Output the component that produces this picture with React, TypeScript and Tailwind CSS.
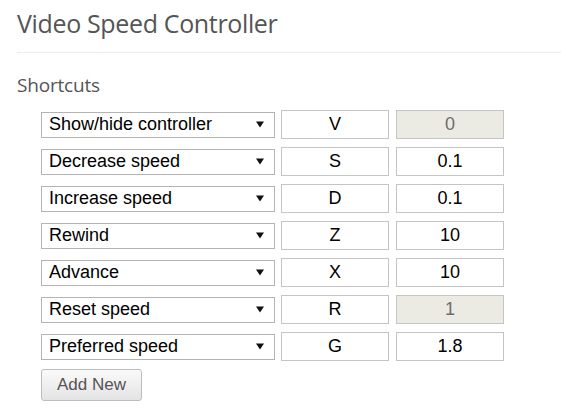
import React from "react";

const shortcuts = [
  { action: "Show/hide controller", key: "V", value: "0", disabled: true },
  { action: "Decrease speed", key: "S", value: "0.1", disabled: false },
  { action: "Increase speed", key: "D", value: "0.1", disabled: false },
  { action: "Rewind", key: "Z", value: "10", disabled: false },
  { action: "Advance", key: "X", value: "10", disabled: false },
  { action: "Reset speed", key: "R", value: "1", disabled: true },
  { action: "Preferred speed", key: "G", value: "1.8", disabled: false },
];

const Arrow = () => (
  <svg width="8" height="7" viewBox="0 0 8 7" className="shrink-0">
    <path d="M0 0.5 H8 L4 6.5 Z" fill="#111" />
  </svg>
);

const App = () => {
  return (
    <div className="w-[561px] h-[409px] bg-white overflow-hidden pl-[17px] font-['Liberation_Sans',Arial,sans-serif]">
      {/* Header */}
      <h1 className="pt-[6px] pb-[12px] border-b border-[#ececec] text-[25px] leading-[34px] tracking-[-0.35px] text-[#555] font-['Open_Sans',sans-serif] font-normal">
        Video Speed Controller
      </h1>

      <h2 className="mt-[19px] text-[19px] leading-[26px] tracking-[-0.2px] text-[#555] font-['Open_Sans',sans-serif] font-normal">
        Shortcuts
      </h2>

      {/* Shortcut rows */}
      <div className="mt-[12px] ml-[24px] flex flex-col gap-[8px]">
        {shortcuts.map((s) => (
          <div key={s.action} className="flex items-center h-[29px]">
            <div className="w-[234px] h-[26px] border border-[#b4b4b4] bg-white flex items-center justify-between pl-[7px] pr-[10px] text-[18px] text-black">
              <span>{s.action}</span>
              <Arrow />
            </div>
            <div className="ml-[6px] w-[108px] h-[29px] border border-[#c4c4c4] bg-white flex items-center justify-center text-[18px] text-black">
              {s.key}
            </div>
            <div
              className={
                s.disabled
                  ? "ml-[7px] w-[108px] h-[29px] border border-[#c4c4c4] bg-[#ebebe4] flex items-center justify-center text-[18px] text-[#6d6d6d]"
                  : "ml-[7px] w-[108px] h-[29px] border border-[#c4c4c4] bg-white flex items-center justify-center text-[18px] text-black"
              }
            >
              {s.value}
            </div>
          </div>
        ))}
      </div>

      <button className="mt-[8px] ml-[24px] w-[101px] h-[32px] border border-[#bdbdbd] rounded-[3px] bg-gradient-to-b from-[#fafafa] to-[#e4e4e4] text-[17px] text-[#555] flex items-center justify-center">
        Add New
      </button>
    </div>
  );
};

export default App;
